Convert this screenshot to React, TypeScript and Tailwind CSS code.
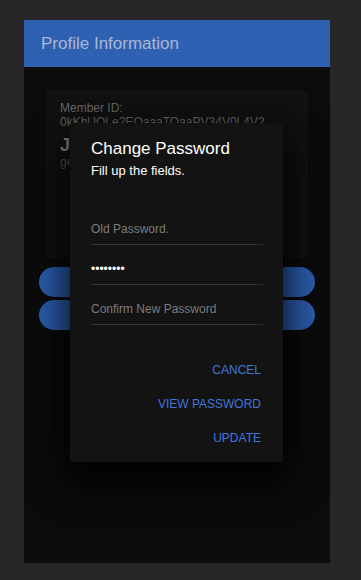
const font = { fontFamily: '"Liberation Sans", Arial, sans-serif' };

function Field({ placeholder, value }: { placeholder?: string; value?: string }) {
  return (
    <div className="h-[40px] flex items-end pb-[8px] border-b border-[#333333]">
      {value ? (
        <span className="text-[12px] leading-[14px] text-white">{value}</span>
      ) : (
        <span className="text-[12px] leading-[14px] text-[#7c7c7c]">{placeholder}</span>
      )}
    </div>
  );
}

export default function App() {
  return (
    <div className="w-[361px] h-[580px] bg-[#272727] pt-[20px] pl-[24px]" style={font}>
      <div className="relative w-[306px] h-[543px] bg-[#0c0c0c] overflow-hidden">
        <header className="h-[47px] bg-[#2e61b2] flex items-center px-[17px]">
          <h1 className="text-[17px] text-[#a9b7d4]">Profile Information</h1>
        </header>

        <div className="mx-[22px] mt-[23px] h-[168px] bg-[#121212] rounded-[3px] px-[14px] pt-[11px]">
          <p className="text-[12px] leading-[14px] text-[#6c6c6c]">Member ID:</p>
          <p className="text-[12px] leading-[14px] text-[#6c6c6c] whitespace-nowrap">0kKhUOLe2EOaaaTOaaPV34V0L4V2</p>
          <p className="mt-[6px] text-[18px] leading-[20px] font-bold text-[#8a8a8a]">Jerome Cruz</p>
          <p className="text-[12px] leading-[14px] text-[#5c5c5c]">gerome@gmail.com</p>
        </div>

        <div className="mx-[15px] mt-[9px] flex flex-col gap-[3px]">
          <div className="h-[30px] rounded-full bg-[#2e62b6]" />
          <div className="h-[30px] rounded-full bg-[#2e62b6]" />
        </div>

        <div className="absolute left-[46px] top-[103px] w-[213px] h-[339px] bg-[#131313] rounded-[3px] shadow-[0_11px_15px_-7px_rgba(0,0,0,0.6),0_24px_38px_3px_rgba(0,0,0,0.5),0_9px_46px_8px_rgba(0,0,0,0.45)] px-[21px] pt-[16px]">
          <h2 className="text-[17px] leading-[20px] text-white">Change Password</h2>
          <p className="mt-[4px] text-[13px] leading-[16px] text-white">Fill up the fields.</p>
          <div className="mt-[26px] mr-[-1px]">
            <Field placeholder="Old Password." />
            <Field value="••••••••" />
            <Field placeholder="Confirm New Password" />
          </div>
          <div className="mt-[38px] flex flex-col items-end gap-[20px] pr-[1px] text-[12px] leading-[14px] text-[#4075de]">
            <button>CANCEL</button>
            <button>VIEW PASSWORD</button>
            <button>UPDATE</button>
          </div>
        </div>
      </div>
    </div>
  );
}
